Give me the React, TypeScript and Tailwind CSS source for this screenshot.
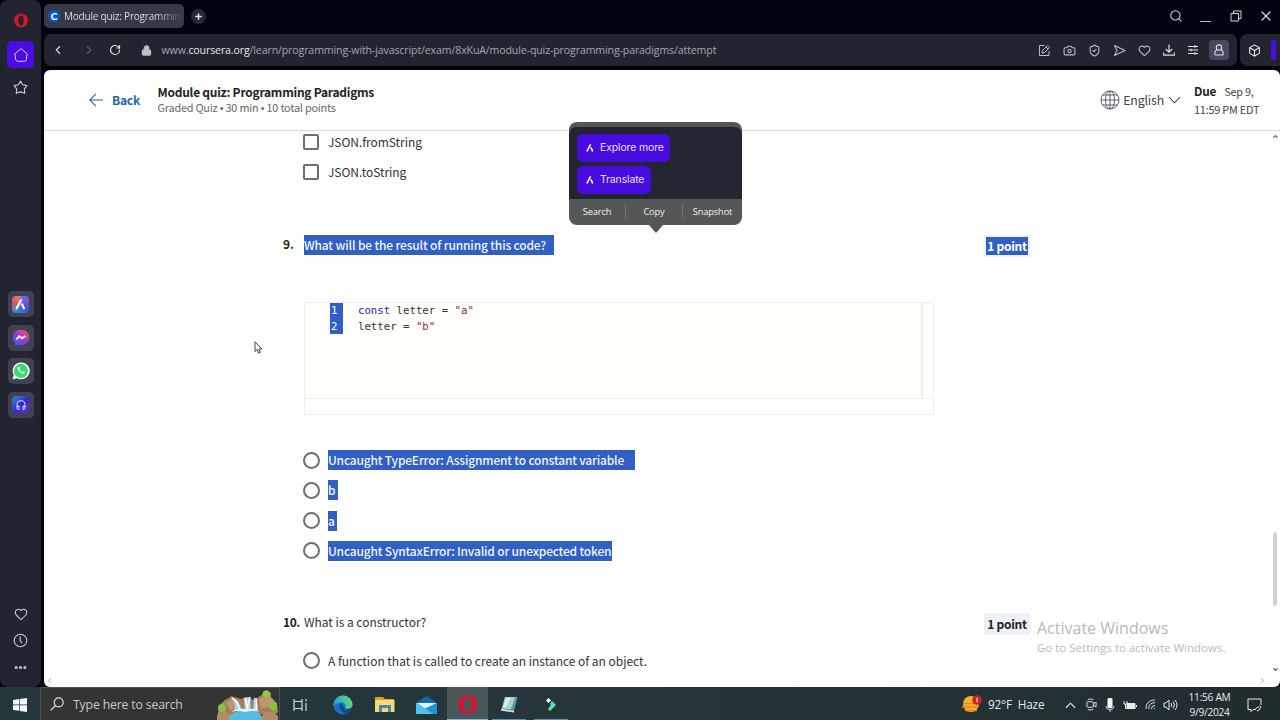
import type { ReactNode } from "react";
import { clsx } from "clsx";
import {
  Box,
  Camera,
  ChevronDown,
  ChevronLeft,
  ChevronRight,
  ChevronUp,
  Ellipsis,
  Heart,
  Lock,
  Plus,
  RotateCw,
  Search,
  ShieldCheck,
  X,
} from "lucide-react";

const answers = [
  { text: "Uncaught TypeError: Assignment to constant variable", box: "w-[307px]", tracking: "tracking-[-0.190px]" },
  { text: "b", box: "w-[10px]", tracking: "" },
  { text: "a", box: "w-[9px]", tracking: "" },
  { text: "Uncaught SyntaxError: Invalid or unexpected token", box: "w-[284px]", tracking: "tracking-[-0.190px]" },
];

function OperaLogo({ className }: { className?: string }) {
  return (
    <svg viewBox="0 0 20 20" className={className}>
      <path
        fill="#d5142f"
        fillRule="evenodd"
        d="M10 0a10 10 0 1 0 0 20 10 10 0 0 0 0-20Zm0 2.8c2.5 0 4 3.2 4 7.2s-1.500 7.200-4 7.200S6 14 6 10s1.500-7.200 4-7.200Z"
      />
    </svg>
  );
}

function AriaMark({ className }: { className?: string }) {
  return (
    <svg viewBox="0 0 10 10" className={className} fill="none" stroke="#fff" strokeLinecap="round" strokeWidth="2">
      <path d="M5.400 1.200 1.500 8.500M6.500 5l1.600 3.500" />
    </svg>
  );
}

function SideTile({ children }: { children: ReactNode }) {
  return (
    <div className="flex size-[26px] items-center justify-center rounded-[5px] bg-[#3f4252]">{children}</div>
  );
}

function Sidebar() {
  return (
    <aside className="flex w-[41px] shrink-0 flex-col items-center rounded-lg bg-[#222530] pb-[12px] pt-[13px] text-[#c9cbd3]">
      <OperaLogo className="h-[15px] w-[14px]" />
      <div className="mt-[13px] flex h-[27px] w-[27px] items-center justify-center rounded-[5px] bg-[#4a0ce0]">
        <svg viewBox="0 0 14 14" className="size-[14px]" fill="none" stroke="#d9ccff" strokeLinejoin="round">
          <path d="M.8 5.900 7 .6l6.200 5.300-1 5.900a1.800 1.800 0 0 1-1.800 1.500H3.600a1.800 1.800 0 0 1-1.800-1.500Z" />
        </svg>
      </div>
      <svg viewBox="0 0 16 16" className="mt-[12px] size-[15px]" fill="none" stroke="currentColor" strokeLinejoin="round" strokeWidth="1.200">
        <path d="M8 1.200 10.200 5l4.600 1-2.700 3.500.4 4.700L8 12.700l-4.500 1.500.4-4.700L1.200 6l4.600-1Z" />
      </svg>
      <div className="mt-[196px] flex flex-col gap-[7.500px]">
        <SideTile>
          <div className="flex size-[17px] items-center justify-center rounded-[4px] bg-[conic-gradient(#7f6be8,#4c4fd0_35%,#2d8ec4_60%,#d45b5f_78%,#e97858)]">
            <AriaMark className="size-[11px]" />
          </div>
        </SideTile>
        <SideTile>
          <svg viewBox="0 0 18 18" className="size-[18px]">
            <defs>
              <linearGradient id="msg" x1="0" y1="1" x2=".8" y2="0">
                <stop offset="0" stopColor="#2d6bf5" />
                <stop offset=".5" stopColor="#9138d9" />
                <stop offset="1" stopColor="#f0526a" />
              </linearGradient>
            </defs>
            <path fill="url(#msg)" d="M9 .8C4.200.8.800 4 .8 8.300c0 2.500.900 4.200 2.500 5.700v3l2.800-1.400c.9.200 1.800.4 2.900.4 4.700 0 8.200-3.300 8.200-7.700S13.700.8 9 .8Z" />
            <path d="m4.300 10.300 3-3 2.700 2 3.400-2.400" fill="none" stroke="#fff" strokeWidth="1.800" />
          </svg>
        </SideTile>
        <SideTile>
          <svg viewBox="0 0 18 18" className="size-[18px]">
            <path fill="#fff" d="M9 .5a8.300 8.300 0 0 0-7.300 12.300L.6 17.400l4.600-1.200A8.400 8.400 0 1 0 9 .5Z" />
            <circle cx="9" cy="8.900" r="7.100" fill="#3bdc6c" />
            <path d="M6 5c-.8.900-.5 2.300 1 4.100 1.700 2 3.700 3.200 5.200 2.300.500-.4.700-.9.600-1.300l-1.900-.9-.9 1c-1.100-.4-2.100-1.300-2.700-2.600l.7-.9L7.300 4.800Z" fill="#fff" />
          </svg>
        </SideTile>
        <SideTile>
          <div className="flex size-[17px] items-center justify-center rounded-[4px] bg-linear-to-br from-[#2e8ac2] via-[#3a23d4] to-[#5a36c8]">
            <svg viewBox="0 0 12 12" className="size-[12px]" fill="none" stroke="#d8dcff">
              <path d="M2 8V5.500a4 4 0 0 1 8 0V8M2 7h2v3.500H2.800L2 9.700ZM10 7H8v3.500h1.200l.8-.8Z" />
            </svg>
          </div>
        </SideTile>
      </div>
      <div className="mt-auto flex flex-col items-center gap-[12px]">
        <Heart className="size-[14px]" strokeWidth={1.8} />
        <svg viewBox="0 0 15 15" className="size-[15px]" fill="none" stroke="currentColor" strokeWidth="1.100">
          <circle cx="7.500" cy="7.500" r="6.300" />
          <path d="M7.200 3.500v4l1.900 2.700" />
        </svg>
        <Ellipsis className="size-[15px]" strokeWidth={3} />
      </div>
    </aside>
  );
}

function TabStrip() {
  return (
    <div className="flex h-[34px] items-start pt-[4px] text-[#e4e5ea]">
      <div className="flex h-[24px] w-[140px] items-center gap-[4px] rounded-[5px] bg-[#363948] pl-[4px]">
        <span className="flex size-[12px] shrink-0 items-center justify-center rounded-full bg-[#0a57c8] font-['Lato',sans-serif] text-[10px] font-black leading-none text-white">
          C
        </span>
        <span className="whitespace-nowrap bg-linear-to-r from-[#e4e5ea] from-80% to-[#4c4f5e] bg-clip-text font-['Open_Sans','Noto_Sans',sans-serif] text-[10px] tracking-[-0.200px] text-transparent">
          Module quiz: Programmin
        </span>
      </div>
      <div className="ml-[7px] mt-[5px] flex size-[15px] items-center justify-center rounded-full bg-[#262936]">
        <Plus className="size-[9px]" strokeWidth={4} />
      </div>
      <div className="ml-auto mr-[6px] mt-[4px] flex items-center text-[#d4d6dc]">
        <Search className="size-[14px]" strokeWidth={1.800} />
        <div className="ml-[17px] mt-[11px] h-px w-[11px] bg-[#b9bbc3]" />
        <svg viewBox="0 0 12 12" className="ml-[19px] size-[12px]" fill="none" stroke="currentColor">
          <path d="M1 3.500h7.500V11H1ZM3.500 3.500V1H11v7.500H8.500" />
        </svg>
        <X className="ml-[16px] size-[16px]" strokeWidth={1.800} />
      </div>
    </div>
  );
}

function AddressBar() {
  return (
    <div className="flex h-[32px] gap-[3px] text-[#b9bcc6]">
      <div className="flex w-[1193px] items-center rounded-[7px] bg-[#222530] pr-[8px]">
        <ChevronLeft className="ml-[7px] size-[14px] text-[#d6d8de]" strokeWidth={2} />
        <ChevronRight className="ml-[17px] size-[14px] text-[#555866]" strokeWidth={2} />
        <RotateCw className="ml-[13px] size-[12px] text-[#e0e2e7]" strokeWidth={2.400} />
        <Lock className="ml-[20px] size-[11px] fill-[#bfc1c9]" strokeWidth={2.400} />
        <span className="ml-[9.500px] mt-[2px] whitespace-nowrap font-['Open_Sans','Noto_Sans',sans-serif] text-[10.600px] tracking-[-0.130px] text-[#a3a6b1]">
          www.<span className="text-[#e6e7eb]">coursera.org</span>
          /learn/programming-with-javascript/exam/8xKuA/module-quiz-programming-paradigms/attempt
        </span>
        <div className="ml-auto flex items-center gap-[12px]">
          <svg viewBox="0 0 13 13" className="size-[13px]" fill="none" stroke="currentColor">
            <path d="M6.500 1.500h-5v10h9.500V7M4 9.200l.6-2.700 5-5 2 2-5 5ZM8 3l2 2" />
          </svg>
          <Camera className="size-[13px]" strokeWidth={2} />
          <ShieldCheck className="size-[13px]" strokeWidth={2} />
          <svg viewBox="0 0 13 13" className="size-[13px]" fill="none" stroke="currentColor" strokeLinejoin="round" strokeWidth="1.100">
            <path d="M1.500 1.500 12 6.500l-10.500 5L4 6.500Z" />
          </svg>
          <Heart className="size-[13px]" strokeWidth={2} />
          <svg viewBox="0 0 12 12" className="size-[12px] text-[#d8dae0]" fill="none" stroke="currentColor" strokeWidth="1.200">
            <path d="M6 .5v7.500M2.800 5 6 8.200 9.200 5M.7 8.500v2.600h10.600V8.500" />
          </svg>
          <svg viewBox="0 0 12 12" className="size-[12px] text-[#e3e4e9]" stroke="currentColor" strokeWidth="1.200">
            <path d="M1 2.500h10M1 6h10M1 9.500h10M8 1.300v2.400M4 4.800v2.400M8 8.300v2.400" />
          </svg>
          <div className="-ml-[2px] flex size-[20px] items-center justify-center rounded-[4px] bg-[#474a5e] text-[#dcdde3]">
            <svg viewBox="0 0 12 12" className="size-[12px]" fill="none" stroke="currentColor" strokeWidth="1.100">
              <circle cx="6" cy="3.600" r="2.700" />
              <path d="M3.800 5.500C2.300 6.500 1.700 8 1.700 9.700q0 1.300 1.300 1.300h6q1.300 0 1.300-1.300c0-1.700-.6-3.200-2.100-4.200" />
            </svg>
          </div>
        </div>
      </div>
      <div className="flex flex-1 items-center justify-between rounded-l-[7px] bg-[#222530] pl-[8px] pr-[4px]">
        <Box className="size-[13px] text-[#e3e4e9]" strokeWidth={2} />
        <div className="h-[20px] w-[5px] rounded-l-[3px] bg-[#470fe0]" />
      </div>
    </div>
  );
}

function QuizHeader() {
  return (
    <header className="flex h-[61px] shrink-0 items-start border-b border-[#d6d8d9] font-['Noto_Sans_CJK_SC',sans-serif]">
      <div className="ml-[45px] mt-[20px] flex h-[20px] w-[68.500px] items-center gap-[9px] text-[#2567a5]">
        <svg viewBox="0 0 14 14" className="size-[14px]" fill="none" stroke="currentColor" strokeWidth="1.100">
          <path d="M14 7H1M7 .8.800 7 7 13.200" />
        </svg>
        <span className="text-[12px] font-bold leading-[20px] tracking-[-0.200px]">Back</span>
      </div>
      <div className="mt-[14px] whitespace-nowrap">
        <p className="text-[12px] font-bold leading-[16px] tracking-[-0.250px] text-[#222]">Module quiz: Programming Paradigms</p>
        <p className="text-[10.900px] leading-[15px] tracking-[-0.220px] text-[#686868]">
          Graded Quiz <span className="font-['Liberation_Sans',sans-serif]">•</span> 30 min{" "}
          <span className="font-['Liberation_Sans',sans-serif]">•</span> 10 total points
        </p>
      </div>
      <div className="ml-auto mt-[20px] flex h-[20px] items-center text-[#444]">
        <svg viewBox="0 0 20 20" className="size-[20px]" fill="none" stroke="#5c646b">
          <circle cx="10" cy="10" r="9" />
          <ellipse cx="10" cy="10" rx="4.500" ry="9" />
          <path d="M10 1v18M1 10h18M2.500 5h15M2.500 15h15" />
        </svg>
        <span className="ml-[3px] text-[12.300px] leading-[20px] tracking-[-0.150px]">English</span>
        <svg viewBox="0 0 14 8" className="ml-[4px] h-[8px] w-[13px]" fill="none" stroke="#444" strokeWidth="1.100">
          <path d="m1 1 6 6 6-6" />
        </svg>
      </div>
      <div className="ml-[13px] mr-[16px] mt-[12px] w-[70px] whitespace-nowrap text-[10.900px] leading-[18px] tracking-[-0.220px] text-[#444]">
        <p>
          <span className="mr-[8px] text-[11.800px] font-bold text-[#222]">Due</span>Sep 9,
        </p>
        <p>11:59 PM EDT</p>
      </div>
    </header>
  );
}

function Points({ selected }: { selected?: boolean }) {
  return (
    <div className={clsx("ml-auto mr-[241px] flex h-[22px] items-center bg-[#eef1f9] px-[2px]", selected ? "mt-0" : "mt-[1px]")}>
      <span
        className={clsx(
          "h-[18px] w-[42px] text-center text-[12px] font-bold leading-[18px] tracking-[-0.250px]",
          selected ? "bg-[#325fc2] text-white" : "text-[#222]",
        )}
      >
        1 point
      </span>
    </div>
  );
}

function Radio() {
  return <span className="size-[17px] rounded-full border-2 border-[#6f6f6f]" />;
}

function CodeEditor() {
  return (
    <div className="ml-[260px] mt-[47px] flex h-[113px] w-[630px] flex-col border border-[#efefef]">
      <div className="flex h-[96px] border-b border-[#f1f1ee]">
        <div className="flex w-[618px] border-r-2 border-[#eeeeec] bg-[#fffffb] font-['DejaVu_Sans_Mono',monospace] text-[10.700px] leading-[16px]">
          <div className="ml-[25px] h-[31px] w-[13px] bg-[#325fc2] pl-px text-white">
            <p>1</p>
            <p>2</p>
          </div>
          <div className="ml-[15px] whitespace-pre text-[#333]">
            <p>
              <span className="text-[#271bb0]">const</span> letter = <span className="text-[#8d2b2b]">"a"</span>
            </p>
            <p>
              letter = <span className="text-[#8d2b2b]">"b"</span>
            </p>
          </div>
        </div>
      </div>
    </div>
  );
}

function QuizBody() {
  return (
    <div className="flex flex-1 overflow-hidden font-['Noto_Sans_CJK_SC',sans-serif] text-[12px] text-[#333]">
      <div className="w-[1227px] whitespace-nowrap">
        {["JSON.fromString", "JSON.toString"].map((label) => (
          <div key={label} className="mb-[8px] ml-[259px] flex h-[22px] items-center gap-[9px]">
            <span className="size-[16px] rounded-[2px] border-2 border-[#6f6f6f]" />
            <span className="leading-[20px] tracking-[-0.050px]">{label}</span>
          </div>
        ))}

        <div className="mt-[52px] flex h-[20px] items-start">
          <span className="ml-[239px] w-[21px] text-[12px] font-bold leading-[18px] text-[#222]">9.</span>
          <span className="h-[20px] w-[250px] bg-[#325fc2] font-medium leading-[19px] tracking-[-0.170px] text-[#eef4ff]">
            What will be the result of running this code?
          </span>
          <Points selected />
        </div>

        <CodeEditor />

        <div className="ml-[259px] mt-[35px] flex flex-col gap-[10.300px]">
          {answers.map(({ text, box, tracking }) => (
            <div key={text} className="flex h-[20px] items-center gap-[8px]">
              <Radio />
              <span className={clsx("h-[20px] bg-[#325fc2] font-medium leading-[20px] text-[#eef4ff]", box, tracking)}>{text}</span>
            </div>
          ))}
        </div>

        <div className="mt-[51px] flex h-[20px] items-start">
          <span className="ml-[239px] w-[21px] text-[12px] font-bold leading-[19px] tracking-[-0.400px] text-[#222]">10.</span>
          <span className="leading-[20px] tracking-[-0.030px]">What is a constructor?</span>
          <Points />
        </div>
        <div className="ml-[259px] mt-[19px] flex h-[20px] items-center gap-[8px]">
          <Radio />
          <span className="leading-[20px] tracking-[-0.020px]">A function that is called to create an instance of an object.</span>
        </div>
      </div>
      <div className="flex w-[8px] flex-col items-center text-[#555]">
        <ChevronUp className="mt-[2px] size-[7px]" strokeWidth={4} />
        <div className="mt-[392px] h-[74px] w-[4px] rounded-full bg-[#cdd4d4]" />
        <ChevronDown className="mt-[60px] size-[7px]" strokeWidth={4} />
      </div>
    </div>
  );
}

function SelectionPopup() {
  return (
    <div className="absolute left-[569px] top-[122px] w-[173px] font-['Inter',sans-serif]">
      <div className="overflow-hidden rounded-[8px] bg-[#555756] pt-[5px]">
        <div className="flex h-[72px] flex-col items-start gap-[4px] rounded-t-[7px] bg-[#232630] pl-[8px] pt-[7px] text-[10.500px] text-[#eadfff]">
          <button className="flex h-[28px] w-[93px] items-center gap-[6px] rounded-[6px] bg-[#480bdf] pl-[9px]">
            <AriaMark className="size-[8px]" />
            <span className="whitespace-nowrap tracking-[-0.150px]">Explore more</span>
          </button>
          <button className="flex h-[28px] w-[74px] items-center gap-[6px] rounded-[6px] bg-[#480bdf] pl-[9px]">
            <AriaMark className="size-[8px]" />
            <span className="tracking-[-0.150px]">Translate</span>
          </button>
        </div>
        <div className="flex h-[26px] items-center pb-[2px] font-['Open_Sans','Noto_Sans',sans-serif] text-[9.300px] tracking-[-0.150px] text-[#f0f0f0]">
          <span className="w-[57px] border-r border-[#727473] text-center leading-[13px]">Search</span>
          <span className="w-[57px] border-r border-[#727473] text-center leading-[13px]">Copy</span>
          <span className="flex-1 text-center leading-[13px]">Snapshot</span>
        </div>
      </div>
      <svg viewBox="0 0 14 8" className="ml-[80px] h-[8px] w-[14px]">
        <path fill="#555756" d="M0 0h14L8 7q-1 1-2 0Z" />
      </svg>
    </div>
  );
}

function Taskbar() {
  return (
    <footer className="flex h-[33px] shrink-0 items-stretch bg-linear-to-r from-[#25373a] via-[#26363b] to-[#212c2f] font-['Open_Sans','Noto_Sans',sans-serif] text-[#e8ebec]">
      <div className="flex w-[40px] items-center justify-center pt-[2px]">
        <svg viewBox="0 0 14 14" className="size-[14px]" fill="#f2f6f7">
          <path d="m0 2 6-.9v5.500H0ZM6.700 1 14 0v6.600H6.700ZM0 7.300h6v5.500L0 12ZM6.700 7.300H14V14l-7.300-1Z" />
        </svg>
      </div>
      <div className="flex w-[240px] items-center border border-b-0 border-[#4b5052] bg-[#333434]">
        <svg viewBox="0 0 14 14" className="ml-[9px] size-[14px]" fill="none" stroke="#e0e0e0" strokeWidth="1.200">
          <circle cx="8.700" cy="5.300" r="4.500" />
          <path d="M5.500 8.500.7 13.300" />
        </svg>
        <span className="ml-[9px] mt-[2px] whitespace-nowrap text-[12.200px] tracking-[-0.130px] text-[#c9cacb]">Type here to search</span>
        <svg viewBox="0 0 62 30" className="ml-auto h-[30px] w-[62px] self-end">
          <path fill="#7fa93a" d="M1 30V22l3-8 4-4 6-3 3 6-3 17ZM46 9V3l4-3 4 3v5l6 5 1 9-4 4Z" />
          <path fill="#a67c5b" d="M8 12 14 6l10 3 5-2 8 3 9-6 9 4 3 8-4 6-12 3H14L6 20Z" />
          <path fill="#c09472" d="m9 13 6-5 7 3-1 7-8 2ZM42 9l9-4 6 5-3 7-10 1Z" />
          <path fill="#a9daf0" d="M15 9q6-2 10 12h-8q3-7-2-12ZM27 8l6-1 1 14h-6ZM37 7q4 5 4 14h-5Z" />
          <path stroke="#f2faff" strokeWidth="1.500" fill="none" d="M15 8q6 3 8 12M28 8l3 12M33 7l-3 12M39 8q1 6 0 12" />
          <path fill="#55bce2" d="M10 30q4-9 18-10 16-1 18 10Z" />
          <path fill="#dff4fb" d="M14 22q6-4 16-3 8-1 12 3-6-2-14 0-8-2-14 0Z" />
          <path fill="#b48a69" d="M0 30v-5l7-3 6 4-1 4ZM44 30l2-7 8-2 7 5v4Z" />
          <circle cx="5" cy="18" r="4" fill="#8fbe43" />
          <circle cx="56" cy="16" r="4" fill="#8fbe43" />
          <circle cx="49" cy="4" r="3.500" fill="#98c64a" />
        </svg>
      </div>
      <div className="flex w-[41px] items-center justify-center pt-[2px]">
        <svg viewBox="0 0 15 14" className="h-[14px] w-[15px]" fill="none" stroke="#d3dadb" strokeWidth="1.200">
          <path d="M1 1v2.500h8V1M1 13v-2.500h8V13M1 3.500v7M9 3.500v7M13 5v8M13 1v2.500" />
        </svg>
      </div>
      <div className="flex w-[43px] items-center justify-center pt-[2px]">
        <svg viewBox="0 0 20 20" className="size-[20px]">
          <defs>
            <linearGradient id="edge" x1="0" x2="1" y1=".3" y2="0">
              <stop stopColor="#20a5dc" />
              <stop offset="1" stopColor="#72dc5c" />
            </linearGradient>
          </defs>
          <circle cx="10" cy="10" r="9.500" fill="#1673c5" />
          <path fill="url(#edge)" d="M.6 9A9.500 9.500 0 0 1 19.500 9c.3 3-1.500 5-4.500 5-2 0-3.800-.6-3-2 1-2 0-4.500-3.500-4.500C4.500 7.500 1.500 9 .6 12Z" />
          <path fill="#0d4a8b" d="M7.500 8C5 12 8 18 13.500 18.800c2-.8 3.800-2 4.500-3.800-4 2-8 0-7.500-3.500Z" />
          <path fill="#26363b" d="M12 12c-.8 1.400 1 2 3 2 2.500 0 4-1.300 4.500-3.200l.5 4-2.500.3c-3 1-6-.5-6-2.500 0-1 .8-1.200.5-.6Z" />
        </svg>
      </div>
      <div className="flex w-[41px] items-center justify-center pt-[2px]">
        <svg viewBox="0 0 20 17" className="h-[17px] w-[20px]">
          <path fill="#d8a32c" d="M0 1h8l2 2h9v3H0Z" />
          <path fill="#f8d775" d="M0 4h19.500v12H0Z" />
          <path fill="#4189ad" d="M4 16V9h12v7h-3v-4H7v4Z" />
        </svg>
      </div>
      <div className="flex w-[42px] items-center justify-center pt-[2px]">
        <svg viewBox="0 0 21 18" className="h-[18px] w-[21px]">
          <path fill="#1668a7" d="M0 7 10.500 0 21 7v2H0Z" />
          <path fill="#4cc3f2" d="M0 7h21v11H0Z" />
          <path fill="#e6f4fa" d="M1 7h19l-9.500 6Z" />
          <path fill="#2294d4" d="m21 7-12 5.500L17 18h4Z" />
        </svg>
      </div>
      <div className="flex w-[41px] items-center justify-center border-b border-[#83b6dc] bg-[#4b5859] pt-[2px]">
        <OperaLogo className="size-[19px]" />
      </div>
      <div className="mx-[4px] flex w-[34px] items-center justify-center border-b border-[#6591b5] pt-[2px]">
        <svg viewBox="0 0 18 17" className="h-[17px] w-[18px]">
          <path fill="#5f9ba4" d="M5 1h12.500l-3.500 14H1Z" />
          <path fill="#a9d3d5" d="M5 1h10l-4 12H2Z" />
          <path fill="#dcebea" d="M6 2h5L6 11H3Z" />
          <path fill="#e1ebea" d="m1 13 13 2v1.500L1 14.500Z" />
        </svg>
      </div>
      <div className="mx-[4px] flex w-[34px] items-center justify-center border-b border-[#6591b5] pt-[2px]">
        <div className="flex size-[18px] items-center justify-center bg-[#293436]">
          <svg viewBox="0 0 12 14" className="h-[14px] w-[12px]">
            <path fill="#fff" d="m3.500 1 2.500 2.500L3.500 6 1 3.500Z" />
            <path fill="#58dfc0" d="m7 4 4 4-6 6-2-2 3-4-1-1Z" />
          </svg>
        </div>
      </div>

      <div className="ml-auto flex items-center pt-[2px]">
        <svg viewBox="0 0 20 18" className="mb-[2px] h-[18px] w-[20px]">
          <circle cx="9" cy="9" r="8" fill="#f5b52f" />
          <path stroke="#e68224" strokeWidth="1.300" d="M1 8.500h14M0 12h16M3 15.500h12" />
          <circle cx="15" cy="5" r="4.800" fill="#cb2027" />
          <path stroke="#fff" d="M15 2.700v4.600" />
        </svg>
        <span className="ml-[6px] w-[57px] whitespace-pre text-[11.700px] tracking-[-0.130px]">92°F  Haze</span>
        <svg viewBox="0 0 12 8" className="ml-[20px] h-[8px] w-[11px]" fill="none" stroke="currentColor" strokeWidth="1.200">
          <path d="m1 7 5-5 5 5" />
        </svg>
        <svg viewBox="0 0 12 14" className="ml-[10px] h-[13px] w-[11px]" fill="none" stroke="currentColor">
          <rect x="1" y="4" width="7" height="6" rx="1" />
          <path d="m8 6 3-1.500v5L8 8M2 1.500q3-1 6 0M2 12.500q3 1 6 0" />
        </svg>
        <svg viewBox="0 0 10 14" className="ml-[8px] h-[14px] w-[10px]">
          <rect x="2.500" y="0" width="5" height="10" rx="1.500" fill="#fff" />
          <path d="M1 8q0 3.500 4 3.500T9 8M5 11v3" fill="none" stroke="#dce1e2" />
        </svg>
        <svg viewBox="0 0 14 10" className="ml-[8px] h-[10px] w-[14px]" fill="none" stroke="currentColor">
          <path fill="#e8ebec" d="M4 3.500h8v5H4Z" />
          <path d="M1 1v3h3V1M2.500 4v4.500H12.500M13.500 5v2" />
        </svg>
        <svg viewBox="0 0 12 12" className="ml-[8px] size-[11px]" fill="none" stroke="currentColor">
          <path d="M1 11Q1 1 11 1M4 11q0-7 7-7M7 11q0-4 4-4M10 11q0-1 1-1" />
        </svg>
        <svg viewBox="0 0 15 12" className="ml-[7px] h-[12px] w-[15px]" fill="none" stroke="currentColor">
          <path d="M1 4h2l3-3v10L3 8H1ZM8 4q1.500 2 0 4M10 2.500q3 3.500 0 7M12 1q4 5 0 10" />
        </svg>
        <div className="ml-[9px] w-[45px] whitespace-nowrap text-center text-[10.200px] leading-[15px] tracking-[-0.300px]">
          <p>11:56 AM</p>
          <p>9/9/2024</p>
        </div>
        <svg viewBox="0 0 15 14" className="ml-[15px] mr-[18px] h-[14px] w-[15px]" fill="none" stroke="currentColor">
          <path d="M9 11.500H6l-2 2v-2H1V1h13v6M10 13q3 0 4-5M8.500 10.500q3-1 4-2.500" />
        </svg>
      </div>
    </footer>
  );
}

export default function App() {
  return (
    <div className="relative flex h-[720px] w-[1280px] flex-col overflow-hidden bg-[#01030e]">
      <div className="flex h-[687px] gap-[3px]">
        <Sidebar />
        <div className="flex w-[1236px] flex-col">
          <TabStrip />
          <AddressBar />
          <main className="mt-[4px] flex h-[617px] flex-col overflow-hidden rounded-[6px] bg-white">
            <QuizHeader />
            <QuizBody />
            <div className="flex h-[13px] shrink-0 items-center justify-between pl-[2px] pr-[14px] text-[#999]">
              <ChevronLeft className="size-[7px]" strokeWidth={3} />
              <ChevronRight className="size-[7px]" strokeWidth={3} />
            </div>
          </main>
        </div>
      </div>
      <Taskbar />

      <SelectionPopup />

      <div className="absolute left-[1037px] top-[617px] whitespace-nowrap font-['Open_Sans','Noto_Sans',sans-serif] text-[#b9b9b9]">
        <p className="text-[16px] leading-[22px]">Activate Windows</p>
        <p className="text-[11.500px] leading-[18px]">Go to Settings to activate Windows.</p>
      </div>

      <svg viewBox="0 0 9 13" className="absolute left-[254px] top-[341px] h-[13px] w-[9px]">
        <path fill="#fff" stroke="#333" strokeWidth=".9" d="M1 .8v9.700l2.200-2 1.500 3.700 1.600-.7-1.500-3.500h3.100Z" />
      </svg>
    </div>
  );
}
